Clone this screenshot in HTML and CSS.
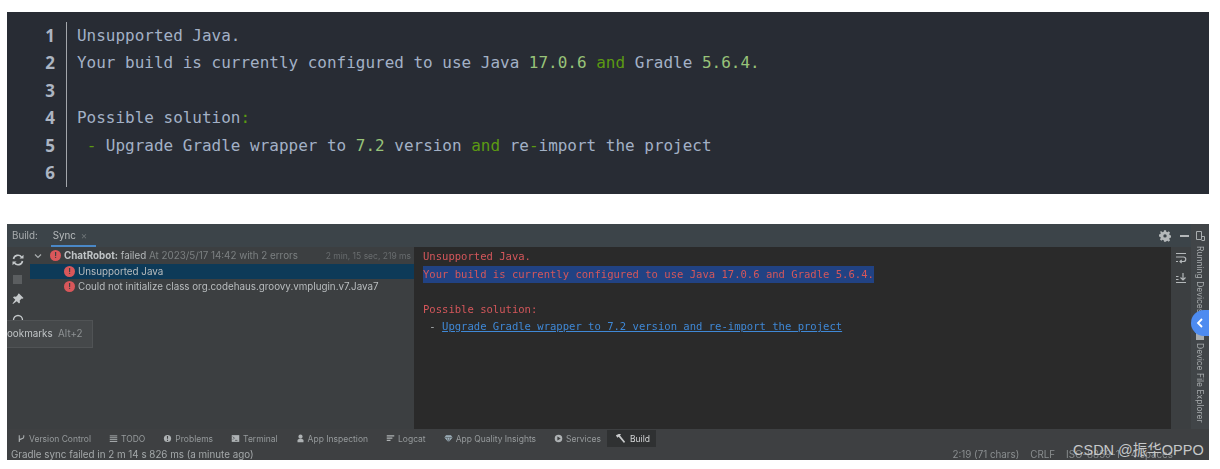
FILE: index.html
```html
<!DOCTYPE html>
<html lang="en">
<head>
    <meta charset="UTF-8">
    <meta name="viewport" content="width=device-width, initial-scale=1.0">
    <title>Unsupported Java</title>
    <link rel="stylesheet" href="styles.css">
</head>
<body>
    <div class="code-block">
        <div class="gutter">
            <span>1</span><span>2</span><span>3</span><span>4</span><span>5</span><span>6</span>
        </div>
        <div class="code">
            <div class="line">Unsupported Java.</div>
            <div class="line">Your build is currently configured to use Java <span class="num">17.0.6</span> <span class="kw">and</span> Gradle <span class="num">5.6.4.</span></div>
            <div class="line"></div>
            <div class="line">Possible solution<span class="kw">:</span></div>
            <div class="line"> <span class="kw">-</span> Upgrade Gradle wrapper to <span class="num">7.2</span> version <span class="kw">and</span> re<span class="kw">-</span>import the project</div>
            <div class="line"></div>
        </div>
    </div>

    <div class="ide">
        <div class="tabbar">
            <span class="tabbar-label">Build:</span>
            <span class="tab">Sync <span class="tab-close">&times;</span></span>
            <span class="tabbar-space"></span>
            <svg class="icon" viewBox="0 0 12 12"><path fill="#b4b8ba" d="M5 .5h2l.3 1.500 1.100.5L9.700 1.600l1.400 1.500-.9 1.200.4 1.100 1.400.4v2l-1.400.4-.4 1.100.9 1.200-1.400 1.500-1.300-.9-1.100.5L7 12H5l-.3-1.400-1.100-.5-1.300.9L.9 9.500l.9-1.200-.4-1.100L0 6.800v-2l1.400-.4.4-1.100-.9-1.200L2.300 1.600l1.300.9 1.100-.5z" transform="translate(0 -.3)"/><circle cx="6" cy="5.900" r="1.700" fill="#3c4449"/></svg>
            <span class="minimize"></span>
        </div>
        <div class="ide-main">
            <div class="left-tools">
                <svg class="icon" viewBox="0 0 12 12"><path fill="none" stroke="#c4c8ca" stroke-width="1.600" d="M1.500 5A4.500 4.500 0 0 1 9.500 3M10.500 7A4.500 4.500 0 0 1 2.500 9"/><path fill="#c4c8ca" d="M7.500 4.500h4V.8zM4.500 7.500h-4v3.700z"/></svg>
                <span class="stop"></span>
                <svg class="icon" viewBox="0 0 12 12"><path fill="#c4c8ca" d="M7 .5l4.500 4.500-1 .8-.8-.3-2 2 .3 2-1 1-2.200-2.300L1 11l-.5-.5 2.800-3.800L1 4.500l1-1 2 .3 2-2-.2-.7z"/></svg>
                <svg class="icon" viewBox="0 0 12 12"><circle cx="6" cy="6" r="4.500" fill="none" stroke="#c4c8ca" stroke-width="1.300"/></svg>
            </div>
            <div class="tree">
                <div class="tree-row root">
                    <svg class="chevron" viewBox="0 0 8 8"><path fill="none" stroke="#a9adaf" stroke-width="1.200" d="M1 2.500l3 3 3-3"/></svg>
                    <span class="err-dot">!</span>
                    <span class="root-text"><b>ChatRobot:</b> failed <span class="dim">At 2023/5/17 14:42 with 2 errors</span></span>
                    <span class="duration">2 min, 15 sec, 219 ms</span>
                </div>
                <div class="tree-row child selected"><span class="err-dot">!</span>Unsupported Java</div>
                <div class="tree-row child"><span class="err-dot">!</span>Could not initialize class org.codehaus.groovy.vmplugin.v7.Java7</div>
            </div>
            <div class="console">
                <div class="console-line">Unsupported Java.</div>
                <div class="console-line"><span class="selection">Your build is currently configured to use Java 17.0.6 and Gradle 5.6.4.</span></div>
                <div class="console-line"></div>
                <div class="console-line">Possible solution:</div>
                <div class="console-line plain"> - <a class="link">Upgrade Gradle wrapper to 7.2 version and re-import the project</a></div>
            </div>
            <div class="right-actions">
                <svg class="icon" viewBox="0 0 12 12"><path fill="none" stroke="#b4b8ba" stroke-width="1.200" d="M1 1.500h10M1 5h7.500a2 2 0 0 1 0 4.500H5M6.700 7.800L5 9.500l1.700 1.700M1 9.500h2"/></svg>
                <svg class="icon" viewBox="0 0 12 12"><path fill="none" stroke="#b4b8ba" stroke-width="1.200" d="M8 1v6.500M5.500 5.500L8 8l2.500-2.500M1 10.500h10M1 7.500h2.500M1 4.500h2.500"/></svg>
            </div>
            <div class="right-strip">
                <svg class="strip-icon" viewBox="0 0 10 10"><path fill="none" stroke="#a9adaf" d="M1.500.5h5v8h-5zM6.500 5.500h3v4h-3"/></svg>
                <span class="strip-label">Running Devices</span>
                <svg class="strip-icon second" viewBox="0 0 10 10"><rect x="1" y="1" width="8" height="8" fill="#a9adaf"/></svg>
                <span class="strip-label">Device File Explorer</span>
            </div>
        </div>
        <div class="toolbar">
            <span class="tool"><svg class="icon" viewBox="0 0 12 12"><path fill="none" stroke="#aeb2b4" stroke-width="1.400" d="M3 1.500v9M9 1.500v2.500q0 2-3 2.500T3 9"/></svg>Version Control</span>
            <span class="tool"><svg class="icon" viewBox="0 0 12 12"><path fill="none" stroke="#aeb2b4" stroke-width="1.200" d="M1 2.500h10M1 5h10M1 7.500h10M1 10h10"/></svg>TODO</span>
            <span class="tool"><svg class="icon" viewBox="0 0 12 12"><circle cx="6" cy="6" r="4.800" fill="#aeb2b4"/><path stroke="#3e4042" stroke-width="1.500" d="M6 2.800v3.600M6 7.800v1.400"/></svg>Problems</span>
            <span class="tool"><svg class="icon" viewBox="0 0 12 12"><rect x="1" y="1.500" width="10" height="9" fill="#aeb2b4"/><path fill="none" stroke="#3e4042" d="M2.500 3.500l2 2-2 2M5.500 8.500h3"/></svg>Terminal</span>
            <span class="tool"><svg class="icon" viewBox="0 0 12 12"><circle cx="6" cy="3.500" r="2.800" fill="#aeb2b4"/><path fill="#aeb2b4" d="M2 11V8.500Q2 6.500 4 6.500h4q2 0 2 2V11z"/></svg>App Inspection</span>
            <span class="tool"><svg class="icon" viewBox="0 0 12 12"><path fill="none" stroke="#aeb2b4" stroke-width="1.400" d="M1 2.500h10M1 5.500h7.500M1 8.500h5"/></svg>Logcat</span>
            <span class="tool"><svg class="icon" viewBox="0 0 12 12"><path fill="#9fb2bd" d="M2.800 1.500h6.400L11.500 4.500 6 11 .5 4.500z"/><path fill="none" stroke="#3e4042" stroke-width=".7" d="M.5 4.500h11M4 4.500L6 11l2-6.500"/></svg>App Quality Insights</span>
            <span class="tool"><svg class="icon" viewBox="0 0 12 12"><circle cx="6" cy="6" r="5" fill="#aeb2b4"/><path fill="#3e4042" d="M4.500 3.200L9 6 4.500 8.800z"/></svg>Services</span>
            <span class="tool active"><svg class="icon" viewBox="0 0 12 12"><path fill="#c8cacb" d="M1 2.500L4 1h2.500L5.500 2.600 11 9.500 9.800 10.800 4 4.200 2.500 5.200z"/></svg>Build</span>
        </div>
        <div class="statusbar">
            <span>Gradle sync failed in 2 m 14 s 826 ms (a minute ago)</span>
            <span class="status-space"></span>
            <span class="status-item">2:19 (71 chars)</span>
            <span class="status-item">CRLF</span>
            <span class="status-item">ISO-8859-1</span>
            <span class="status-item">4 spaces</span>
        </div>
        <div class="tooltip">ookmarks&nbsp; <span class="shortcut">Alt+2</span></div>
        <div class="collapse-btn"><svg viewBox="0 0 8 10"><path fill="none" stroke="#fff" stroke-width="1.800" d="M6 1L2 5l4 4"/></svg></div>
    </div>
    <div class="watermark">CSDN @振华OPPO</div>
</body>
</html>
```

FILE: styles.css
```css
body {
    margin: 0;
    background: #fff;
    height: 469px;
    overflow: hidden;
    position: relative;
}

/* top code block */
.code-block {
    margin: 12px 11px 0 7px;
    height: 182px;
    background: #282c34;
    display: flex;
    padding-top: 9.6px;
    box-sizing: border-box;
}
.gutter {
    width: 48px;
    height: 165px;
    padding-right: 11px;
    border-right: 1px solid #a3a6ab;
    display: flex;
    flex-direction: column;
    align-items: flex-end;
    color: #acb5c2;
    font: bold 17px/27.5px "Open Sans", sans-serif;
}
.code {
    margin-left: 10px;
    color: #a3b1c6;
    font: 15.98px/27.5px "DejaVu Sans Mono", monospace;
}
.line {
    height: 27.5px;
    white-space: pre;
}
.num {
    color: #98c379;
}
.kw {
    color: #5c9a12;
}

/* IDE panel */
.ide {
    position: absolute;
    left: 7px;
    top: 224px;
    width: 1202px;
    height: 236px;
    display: flex;
    flex-direction: column;
    background: #3c3f41;
    font-family: Inter, sans-serif;
    font-size: 9.800px;
    color: #b4b8ba;
    filter: blur(0.45px);
    overflow: hidden;
}
.icon {
    width: 12px;
    height: 12px;
    flex: none;
}
.tabbar {
    height: 23px;
    background: #3c4449;
    display: flex;
    align-items: center;
    padding-left: 5px;
    padding-right: 3px;
    gap: 15px;
    flex: none;
}
.tabbar-label {
    color: #a9adaf;
}
.tab {
    height: 23px;
    line-height: 24px;
    padding: 0 9px 0 2px;
    margin-left: -2px;
    box-sizing: border-box;
    border-bottom: 2px solid #4a88c7;
    color: #b8bcbe;
}
.tab-close {
    color: #6f7679;
    margin-left: 2px;
}
.tabbar-space {
    flex: 1;
}
.minimize {
    width: 9px;
    height: 2px;
    background: #b4b8ba;
    margin-right: 17px;
    margin-left: -6px;
}

.ide-main {
    flex: 1;
    display: flex;
    min-height: 0;
}
.left-tools {
    width: 23px;
    flex: none;
    display: flex;
    flex-direction: column;
    align-items: center;
    padding: 7px 2px 0 0;
    box-sizing: border-box;
    gap: 9px;
}
.stop {
    width: 9px;
    height: 9px;
    background: #5b5e60;
}
.tree {
    width: 384px;
    flex: none;
    padding-top: 1px;
    box-sizing: border-box;
}
.tree-row {
    height: 15.500px;
    display: flex;
    align-items: center;
    white-space: nowrap;
}
.root {
    padding-left: 4px;
}
.chevron {
    width: 8px;
    height: 8px;
    margin-right: 8px;
}
.root-text b {
    color: #c0c4c6;
}
.dim {
    color: #7c8082;
}
.duration {
    margin-left: auto;
    margin-right: 3px;
    color: #686c6e;
    font-size: 8.500px;
}
.child {
    padding-left: 34px;
    color: #b8bcbe;
}
.selected {
    background: #0d3a58;
}
.err-dot {
    width: 11px;
    height: 11px;
    border-radius: 50%;
    background: #d9575a;
    color: #3c3f41;
    font-size: 8px;
    font-weight: bold;
    line-height: 11px;
    text-align: center;
    margin-right: 3px;
    flex: none;
}
.console {
    flex: 1;
    background: #2a2a2a;
    padding: 1px 0 0 9px;
    font: 10.560px/17.500px "DejaVu Sans Mono", monospace;
    color: #d4575b;
}
.console-line {
    height: 17.500px;
    white-space: pre;
}
.selection {
    display: inline-block;
    background: #214283;
}
.plain {
    color: #a9adaf;
}
.link {
    color: #3f88d6;
    text-decoration: underline;
}
.right-actions {
    width: 20px;
    flex: none;
    display: flex;
    flex-direction: column;
    align-items: center;
    padding-top: 5px;
    gap: 8px;
}
.right-strip {
    width: 18px;
    flex: none;
    margin-top: -23px;
    padding-top: 7px;
    box-sizing: border-box;
    display: flex;
    align-items: center;
    background: #414548;
    color: #a9adaf;
    font-size: 8.500px;
    writing-mode: vertical-rl;
}
.strip-label {
    white-space: nowrap;
}
.strip-icon {
    width: 10px;
    height: 10px;
    flex: none;
    margin-bottom: 5px;
}
.strip-icon.second {
    margin-top: 18px;
    margin-bottom: 2px;
}

.toolbar {
    height: 19px;
    flex: none;
    display: flex;
    align-items: center;
    gap: 18px;
    padding-left: 10px;
    background: #3e4042;
    color: #969a9c;
    font-size: 8.500px;
}
.tool {
    display: flex;
    align-items: center;
    gap: 3px;
    height: 17px;
    white-space: nowrap;
}
.tool .icon {
    width: 9px;
    height: 9px;
}
.tool.active {
    background: #2f3132;
    color: #d2d4d5;
    margin-left: -12px;
    padding: 0 6px 0 8px;
    gap: 4px;
}
.tool.active .icon {
    width: 11px;
    height: 11px;
}
.statusbar {
    height: 12px;
    flex: none;
    display: flex;
    align-items: center;
    padding-left: 4px;
    padding-right: 36px;
    gap: 11px;
    background: #3e4042;
    color: #a4a8aa;
    white-space: nowrap;
}
.status-space {
    flex: 1;
}
.status-item {
    color: #8a8e90;
}

/* overlays */
.tooltip {
    position: absolute;
    left: 0;
    top: 96px;
    width: 86px;
    height: 28px;
    box-sizing: border-box;
    background: #45484a;
    border: 1px solid #505355;
    border-left: none;
    line-height: 26px;
    color: #c0c4c6;
    white-space: nowrap;
}
.shortcut {
    color: #8e9294;
}
.collapse-btn {
    position: absolute;
    right: 0;
    top: 86px;
    width: 18px;
    height: 26px;
    border-radius: 13px 0 0 13px;
    background: #4d8bf0;
    display: flex;
    align-items: center;
    justify-content: center;
}
.collapse-btn svg {
    width: 8px;
    height: 10px;
}
.watermark {
    position: absolute;
    left: 1073px;
    top: 441px;
    font: 14.500px/19px "Liberation Sans", "Noto Sans CJK SC", sans-serif;
    color: #c6c8c9;
    white-space: nowrap;
}
```
